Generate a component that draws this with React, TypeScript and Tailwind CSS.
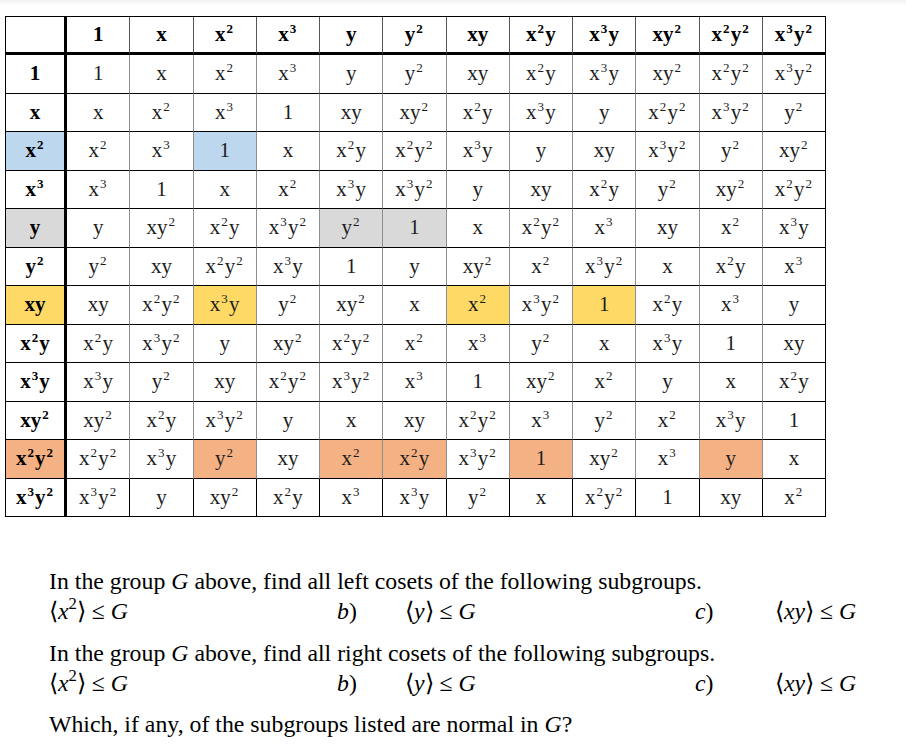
const header = ['1', 'x', 'x2', 'x3', 'y', 'y2', 'xy', 'x2y', 'x3y', 'xy2', 'x2y2', 'x3y2']

const rows: string[][] = [
  ['1', 'x', 'x2', 'x3', 'y', 'y2', 'xy', 'x2y', 'x3y', 'xy2', 'x2y2', 'x3y2'],
  ['x', 'x2', 'x3', '1', 'xy', 'xy2', 'x2y', 'x3y', 'y', 'x2y2', 'x3y2', 'y2'],
  ['x2', 'x3', '1', 'x', 'x2y', 'x2y2', 'x3y', 'y', 'xy', 'x3y2', 'y2', 'xy2'],
  ['x3', '1', 'x', 'x2', 'x3y', 'x3y2', 'y', 'xy', 'x2y', 'y2', 'xy2', 'x2y2'],
  ['y', 'xy2', 'x2y', 'x3y2', 'y2', '1', 'x', 'x2y2', 'x3', 'xy', 'x2', 'x3y'],
  ['y2', 'xy', 'x2y2', 'x3y', '1', 'y', 'xy2', 'x2', 'x3y2', 'x', 'x2y', 'x3'],
  ['xy', 'x2y2', 'x3y', 'y2', 'xy2', 'x', 'x2', 'x3y2', '1', 'x2y', 'x3', 'y'],
  ['x2y', 'x3y2', 'y', 'xy2', 'x2y2', 'x2', 'x3', 'y2', 'x', 'x3y', '1', 'xy'],
  ['x3y', 'y2', 'xy', 'x2y2', 'x3y2', 'x3', '1', 'xy2', 'x2', 'y', 'x', 'x2y'],
  ['xy2', 'x2y', 'x3y2', 'y', 'x', 'xy', 'x2y2', 'x3', 'y2', 'x2', 'x3y', '1'],
  ['x2y2', 'x3y', 'y2', 'xy', 'x2', 'x2y', 'x3y2', '1', 'xy2', 'x3', 'y', 'x'],
  ['x3y2', 'y', 'xy2', 'x2y', 'x3', 'x3y', 'y2', 'x', 'x2y2', '1', 'xy', 'x2'],
]

// row index -> [colour, highlighted body columns]
const marks: Record<number, [string, number[]]> = {
  2: ['bg-[#bdd7ee]', [2]],
  4: ['bg-[#d9d9d9]', [4, 5]],
  6: ['bg-[#ffd966]', [2, 6, 8]],
  10: ['bg-[#f4b183]', [2, 4, 5, 7, 10]],
}

function Elem({ s }: { s: string }) {
  const parts: React.ReactNode[] = []
  for (let i = 0; i < s.length; i++) {
    const c = s[i]
    if (/\d/.test(c) && i > 0) {
      parts.push(
        <sup key={i} className="text-[0.62em] -top-[0.62em] ml-px mr-px">
          {c}
        </sup>
      )
    } else {
      parts.push(<span key={i}>{c}</span>)
    }
  }
  return <>{parts}</>
}

function Cell({ s, bold, bg, last, edge }: { s: string; bold?: boolean; bg?: string; last?: boolean; edge?: boolean }) {
  return (
    <div
      className={`flex items-center justify-center border-b border-b-black ${
        edge ? 'border-r-[3px] border-r-black' : last ? 'border-r border-r-black' : 'border-r-[1.5px] border-r-[#8f8f8f]'
      } ${bold ? 'font-bold text-[21px] text-black' : 'text-[21px] text-[#1c1c1c]'} ${bg ?? 'bg-white'}`}
    >
      <span className="leading-none">
        <Elem s={s} />
      </span>
    </div>
  )
}

function Sub({ children }: { children: React.ReactNode }) {
  return <span className="italic">{children}</span>
}

function ChoiceLine() {
  return (
    <div className="flex items-baseline h-[29px]">
      <span className="w-[288px]">
        ⟨<Sub>x</Sub>
        <sup className="text-[0.7em] -top-[0.6em]">2</sup>⟩ ≤ <Sub>G</Sub>
      </span>
      <span className="w-[68px]">
        <Sub>b</Sub>)
      </span>
      <span className="w-[290px]">
        ⟨<Sub>y</Sub>⟩ ≤ <Sub>G</Sub>
      </span>
      <span className="w-[80px]">
        <Sub>c</Sub>)
      </span>
      <span>
        ⟨<Sub>xy</Sub>⟩ ≤ <Sub>G</Sub>
      </span>
    </div>
  )
}

export default function App() {
  return (
    <div className="w-[906px] h-[755px] bg-white overflow-hidden font-['Liberation_Serif',serif]">
      <div className="h-[6px] bg-gradient-to-b from-[#f2f2f2] to-white" />
      <div className="ml-[5px] mt-[10px] w-[821px] border-l border-t border-black grid grid-cols-[61px_repeat(12,63.25px)] grid-rows-[38px_repeat(12,38.5px)]">
        <div className="border-b-[3px] border-b-black border-r-[3px] border-r-black bg-white" />
        {header.map((h, j) => (
          <div
            key={j}
            className={`flex items-center justify-center border-b-[3px] border-b-black border-r ${
              j === 11 ? 'border-r-black' : 'border-r-[#555]'
            } font-bold text-[21px] text-black`}
          >
            <span className="leading-none">
              <Elem s={h} />
            </span>
          </div>
        ))}
        {rows.map((r, i) => {
          const m = marks[i]
          return [
            <Cell key={`h${i}`} s={header[i]} bold edge bg={m ? m[0] : undefined} />,
            ...r.map((v, j) => (
              <Cell
                key={`${i}-${j}`}
                s={v}
                last={i === 11 || j === 11}
                bg={m && m[1].includes(j) ? m[0] : undefined}
              />
            )),
          ]
        })}
      </div>

      <div className="ml-[49px] mt-[49px] text-[23.8px] text-black leading-[30px]">
        <div>
          In the group <Sub>G</Sub> above, find all left cosets of the following subgroups.
        </div>
        <ChoiceLine />
        <div className="mt-[13px]">
          In the group <Sub>G</Sub> above, find all right cosets of the following subgroups.
        </div>
        <ChoiceLine />
        <div className="mt-[12px]">
          Which, if any, of the subgroups listed are normal in <Sub>G</Sub>?
        </div>
      </div>
    </div>
  )
}
